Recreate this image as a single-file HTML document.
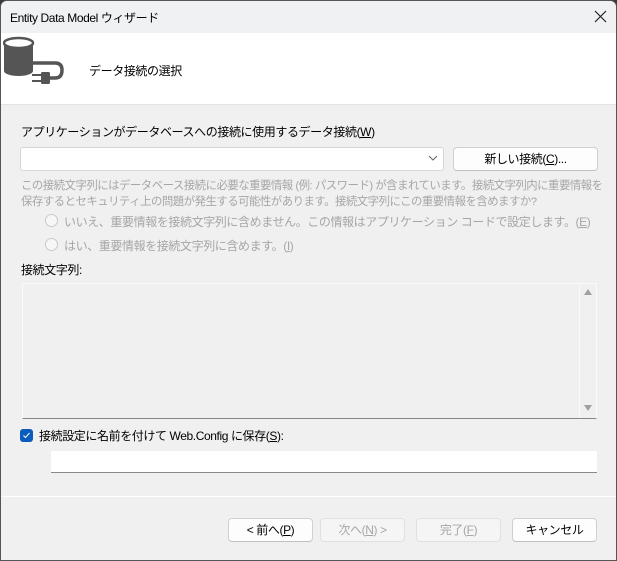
<!DOCTYPE html>
<html><head><meta charset="utf-8"><style>
*{box-sizing:border-box;margin:0;padding:0}
body{width:617px;height:561px;background:#3a3a3a;font-family:"Liberation Sans","Noto Sans CJK JP",sans-serif;font-size:12px;color:#000;position:relative;overflow:hidden}
.win{position:absolute;left:0;top:0;width:617px;height:561px;background:#f0f0f0;border:1px solid #555;border-radius:7px 7px 0 0;overflow:hidden}
.title{position:absolute;left:0;top:0;width:615px;height:32px;background:#f0f1f3}
.hdr{position:absolute;left:0;top:32px;width:615px;height:72px;background:#fff;border-bottom:1px solid #e3e3e3}
.a{position:absolute;white-space:nowrap;letter-spacing:-0.4px}
.g{color:#a6a6a6}
.btn{position:absolute;height:24px;border:1px solid #d0d0d0;border-bottom-color:#c0c0c0;border-radius:4px;background:#fdfdfd;text-align:center;line-height:22px;letter-spacing:-0.4px}
.dis{color:#a6a6a6;background:#f5f5f5;border-color:#e0e0e0}
.rad{position:absolute;width:13px;height:13px;border:1px solid #c8c8c8;border-radius:50%;background:#f7f7f7}
u{text-decoration:underline}
</style></head><body><div class="win">
<div class="title"></div>
<div class="a" style="left:9px;top:8px;font-size:12px">Entity Data Model ウィザード</div>
<svg class="a" style="left:593px;top:9px" width="13" height="13" viewBox="0 0 13 13"><path d="M1 1L12 12M12 1L1 12" stroke="#222" stroke-width="1.2"/></svg>
<div class="hdr"></div>
<svg class="a" style="left:2px;top:34px" width="64" height="54" viewBox="0 0 64 54">
<rect x="1" y="8" width="29" height="28" fill="#555"/><ellipse cx="15.5" cy="36" rx="14.5" ry="5" fill="#555"/>
<ellipse cx="15.5" cy="8" rx="14.5" ry="5" fill="#fff" stroke="#555" stroke-width="2.5"/>
<path d="M30 28H52Q59 28 59 35Q59 43 52 43H46" stroke="#555" stroke-width="3.5" fill="none"/>
<rect x="38" y="37" width="9" height="12" rx="1.5" fill="#555"/>
<path d="M29 40H38M29 46H38" stroke="#555" stroke-width="2"/>
</svg>
<div class="a" style="left:88px;top:61px;font-size:12px">データ接続の選択</div>
<div class="a" style="left:20px;top:122px">アプリケーションがデータベースへの接続に使用するデータ接続(<u>W</u>)</div>
<div class="a" style="left:19px;top:146px;width:424px;height:24px;background:#fff;border:1px solid #d6d6d6;border-radius:3px"></div>
<svg class="a" style="left:427px;top:154px" width="10" height="7"><path d="M1 1L5 5L9 1" stroke="#666" fill="none"/></svg>
<div class="btn" style="left:452px;top:146px;width:145px">新しい接続(<u>C</u>)...</div>
<div class="a g" style="left:20px;top:177px;line-height:16px;font-size:11.4px;letter-spacing:-0.5px">この接続文字列にはデータベース接続に必要な重要情報 (例: パスワード) が含まれています。接続文字列内に重要情報を<br>保存するとセキュリティ上の問題が発生する可能性があります。接続文字列にこの重要情報を含めますか?</div>
<div class="rad" style="left:44px;top:213px"></div>
<div class="a g" style="left:63px;top:212px">いいえ、重要情報を接続文字列に含めません。この情報はアプリケーション コードで設定します。(<u>E</u>)</div>
<div class="rad" style="left:44px;top:237px"></div>
<div class="a g" style="left:63px;top:236px">はい、重要情報を接続文字列に含めます。(<u>I</u>)</div>
<div class="a" style="left:20px;top:260px">接続文字列:</div>
<div class="a" style="left:21px;top:282px;width:575px;height:136px;border:1px solid #fafafa;border-bottom:1px solid #888;background:#f0f0f0"></div>
<div class="a" style="left:578px;top:283px;width:1px;height:134px;background:#fafafa"></div>
<svg class="a" style="left:582px;top:287px" width="10" height="8"><path d="M1 7L5 1L9 7Z" fill="#a0a0a0"/></svg>
<svg class="a" style="left:582px;top:403px" width="10" height="8"><path d="M1 1L5 7L9 1Z" fill="#a0a0a0"/></svg>
<div class="a" style="left:19px;top:428px;width:13px;height:13px;background:#0b5cbd;border-radius:3px"></div>
<svg class="a" style="left:21px;top:430px" width="9" height="9"><path d="M1.5 4.5L3.5 6.5L7.5 2" stroke="#fff" fill="none" stroke-width="1"/></svg>
<div class="a" style="left:38px;top:426px">接続設定に名前を付けて Web.Config に保存(<u>S</u>):</div>
<div class="a" style="left:50px;top:450px;width:546px;height:22px;background:#fff;border-bottom:1px solid #888"></div>
<div class="a" style="left:0;top:495px;width:617px;height:1px;background:#fff"></div>
<div class="btn" style="left:227px;top:517px;width:85px">&lt; 前へ(<u>P</u>)</div>
<div class="btn dis" style="left:319px;top:517px;width:85px">次へ(<u>N</u>) &gt;</div>
<div class="btn dis" style="left:415px;top:517px;width:85px">完了(<u>F</u>)</div>
<div class="btn" style="left:511px;top:517px;width:85px">キャンセル</div>
</div></body></html>
